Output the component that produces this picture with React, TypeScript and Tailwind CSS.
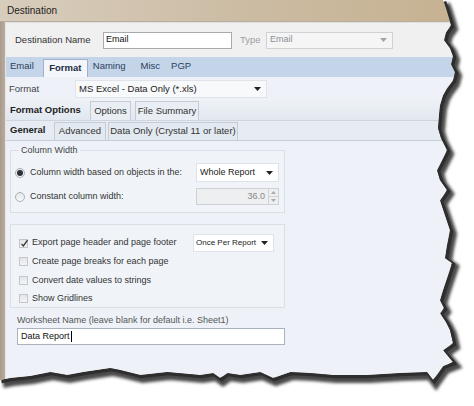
import React from "react";

const edge: [number, number][] = [
  [443, 0], [446, 8], [449, 18], [451, 25], [446, 32], [444, 40], [450, 48], [453, 56], [451, 64], [455, 72],
  [453, 80], [447, 88], [443, 95], [440, 105], [439, 115], [438, 128], [441, 138], [447, 150], [443, 158],
  [437, 170], [440, 180], [447, 190], [440, 200], [444, 212], [450, 230], [447, 245], [445, 258], [452, 263],
  [448, 275], [443, 290], [440, 300], [444, 308], [440, 313], [446, 322], [450, 330], [453, 343], [443, 350],
  [448, 356], [453, 362], [443, 366], [433, 380], [427, 372], [400, 373], [367, 375], [333, 375], [310, 373],
  [290, 372], [273, 378], [260, 372], [240, 375], [227, 373], [220, 378], [213, 373], [200, 375], [167, 372],
  [140, 375], [120, 370], [110, 368], [83, 372], [67, 375], [50, 372], [30, 376], [10, 378], [0, 380],
];

const edgeStr = edge.map((p) => p.join(",")).join(" ");
const outsideStr = edgeStr + " 0,406 474,406 474,0";

function Arrow({ color = "#222" }: { color?: string }) {
  return (
    <svg width="7" height="4" viewBox="0 0 7 4" className="shrink-0">
      <path d="M0 0 L7 0 L3.5 4 Z" fill={color} />
    </svg>
  );
}

function Radio({ on }: { on?: boolean }) {
  return (
    <span className="flex h-[10px] w-[10px] shrink-0 items-center justify-center rounded-full border border-[#a9b0b8] bg-gradient-to-b from-[#e4e6e9] to-[#f8f8f8]">
      {on && <span className="h-[6px] w-[6px] rounded-full bg-[#2d3036]" />}
    </span>
  );
}

function Check({ on }: { on?: boolean }) {
  return (
    <span className="relative flex h-[9px] w-[9px] shrink-0 items-center justify-center border border-[#c3c7cc] bg-gradient-to-b from-[#e3e5e8] to-[#f3f4f6]">
      {on && (
        <svg width="9" height="9" viewBox="0 0 9 9" className="absolute -top-[1px] left-0">
          <path d="M1.5 4.8 L3.4 7 L7.5 1.2" stroke="#333" strokeWidth="1.3" fill="none" />
        </svg>
      )}
    </span>
  );
}

export default function App() {
  return (
    <div
      className="relative h-[406px] w-[474px] overflow-hidden whitespace-nowrap bg-white text-[9px] text-[#333]"
      style={{ fontFamily: '"Liberation Sans", Arial, sans-serif' }}
    >
      <div className="flex h-full flex-col">
        {/* title bar */}
        <div className="flex h-[22px] items-center border-b border-[#b9ad9c] bg-gradient-to-r from-[#d8cdbd] via-[#ccbca4] to-[#c6b190] pl-[7px] text-[10px] text-[#222]">
          Destination
        </div>
        <div className="flex flex-1">
          {/* left frame */}
          <div className="w-[6px] border-r border-[#e7e3de] bg-gradient-to-r from-[#a89a8c] to-[#b9ad9f]" />
          <div className="flex flex-1 flex-col">
            {/* header */}
            <div className="flex h-[35px] items-center border-t border-[#e0e0e0] bg-[#f0f0f0]">
              <span className="ml-[9px] w-[88px] text-[9.5px] text-[#333]">Destination Name</span>
              <div className="flex h-[17px] w-[129px] items-center border border-[#a7abb0] bg-white pl-[2px] text-[9px] text-[#111]">
                Email
              </div>
              <span className="ml-[8px] w-[26px] text-[9.5px] text-[#9aa0a6]">Type</span>
              <div className="flex h-[17px] w-[127px] items-center justify-between border border-[#cfd2d6] bg-[#f5f5f5] pl-[3px] pr-[5px] text-[9px] text-[#8a8f95]">
                Email
                <Arrow color="#a0a4a8" />
              </div>
            </div>
            {/* tab bar */}
            <div className="flex h-[20px] items-end bg-[#c4d4e9] text-[9.5px] text-[#2b3f5c]">
              <span className="mb-[4px] ml-[4px]">Email</span>
              <span className="ml-[9px] flex h-[18px] w-[45px] items-center justify-center border border-b-0 border-[#9fb2c9] bg-[#f3f6fa] font-bold text-[#1c2b40]">
                Format
              </span>
              <span className="mb-[4px] ml-[5px]">Naming</span>
              <span className="mb-[4px] ml-[15px]">Misc</span>
              <span className="mb-[4px] ml-[11px]">PGP</span>
            </div>
            {/* body */}
            <div className="flex flex-1 flex-col bg-[#eef2f8]">
              <div className="mt-[3px] flex h-[18px] items-center">
                <span className="ml-[3px] w-[66px] text-[9.5px] text-[#444]">Format</span>
                <div className="flex h-[18px] w-[192px] items-center justify-between border border-[#dfe4ea] bg-[#f8f9fb] pl-[3px] pr-[5px] text-[9.5px] text-[#222]">
                  MS Excel - Data Only (*.xls)
                  <Arrow />
                </div>
              </div>
              {/* tab strip 2 */}
              <div className="mt-[3px] flex h-[20px] items-end border-b border-[#cdd5df] bg-gradient-to-b from-[#edf1f6] to-[#e2e8f0] text-[9.5px] text-[#333]">
                <span className="flex h-[19px] w-[81px] items-center pl-[4px] font-bold text-[#222]">Format Options</span>
                <span className="ml-[3px] flex h-[19px] w-[41px] items-center justify-center border border-b-0 border-[#c5ccd6] bg-[#e9eef4]">Options</span>
                <span className="ml-[4px] flex h-[19px] w-[64px] items-center justify-center border border-b-0 border-[#c5ccd6] bg-[#e9eef4]">File Summary</span>
              </div>
              {/* tab strip 3 */}
              <div className="flex h-[20px] items-end border-b border-[#c4ccd7] bg-[#e7ecf3] text-[9.5px] text-[#333]">
                <span className="flex h-[19px] w-[47px] items-center pl-[4px] font-bold text-[#222]">General</span>
                <span className="ml-[1px] flex h-[18px] w-[52px] items-center justify-center border border-b-0 border-[#c5ccd6] bg-[#e3e9f0]">Advanced</span>
                <span className="ml-[2px] flex h-[18px] w-[130px] items-center justify-center border border-b-0 border-[#c5ccd6] bg-[#e3e9f0]">Data Only (Crystal 11 or later)</span>
              </div>

              {/* group 1 */}
              <fieldset className="ml-[4px] mt-[4px] w-[275px] border border-[#d9dfe7] bg-[#f0f4f9] pb-[7px] pl-[4px]">
                <legend className="ml-[4px] px-[2px] text-[9px] leading-[10px] text-[#444]">Column Width</legend>
                <div className="mt-[8px] flex h-[19px] items-center">
                  <Radio on />
                  <span className="ml-[5px] w-[166px] text-[#333]">Column width based on objects in the:</span>
                  <div className="flex h-[19px] w-[83px] items-center justify-between border border-[#dde3ea] bg-white pl-[3px] pr-[5px] text-[#222]">
                    Whole Report
                    <Arrow />
                  </div>
                </div>
                <div className="mt-[6px] flex h-[17px] items-center">
                  <Radio />
                  <span className="ml-[5px] w-[166px] text-[#333]">Constant column width:</span>
                  <div className="flex h-[17px] w-[83px] items-center justify-end border border-[#cdd1d6] bg-[#eeeff1] text-[#888]">
                    <span className="mr-[3px]">36.0</span>
                    <div className="flex h-full w-[10px] flex-col border-l border-[#d0d4d9]">
                      <div className="flex flex-1 items-center justify-center border-b border-[#d0d4d9]">
                        <svg width="5" height="3" viewBox="0 0 5 3"><path d="M0 3 L5 3 L2.5 0 Z" fill="#aaa" /></svg>
                      </div>
                      <div className="flex flex-1 items-center justify-center">
                        <svg width="5" height="3" viewBox="0 0 5 3"><path d="M0 0 L5 0 L2.5 3 Z" fill="#aaa" /></svg>
                      </div>
                    </div>
                  </div>
                </div>
              </fieldset>

              {/* group 2 */}
              <div className="ml-[4px] mt-[11px] flex w-[275px] flex-col border border-[#d9dfe7] bg-[#f0f4f9] pl-[8px] pt-[9px]">
                <div className="flex h-[18px] items-center">
                  <Check on />
                  <span className="ml-[4px] w-[161px] text-[#333]">Export page header and page footer</span>
                  <div className="flex h-[18px] w-[81px] items-center justify-between border border-[#dde3ea] bg-white pl-[2px] pr-[5px] text-[8px] text-[#222]">
                    Once Per Report
                    <Arrow />
                  </div>
                </div>
                <div className="flex h-[19px] items-center">
                  <Check />
                  <span className="ml-[4px]">Create page breaks for each page</span>
                </div>
                <div className="flex h-[19px] items-center">
                  <Check />
                  <span className="ml-[4px]">Convert date values to strings</span>
                </div>
                <div className="flex h-[17px] items-center">
                  <Check />
                  <span className="ml-[4px]">Show Gridlines</span>
                </div>
              </div>

              <div className="ml-[11px] mt-[6px] h-[12px] leading-[12px] text-[#555]">
                Worksheet Name (leave blank for default i.e. Sheet1)
              </div>
              <div className="ml-[11px] mt-[2px] flex h-[17px] w-[268px] items-center border border-[#a9b2bd] bg-white pl-[3px] text-[#111]">
                Data Report
                <span className="ml-[1px] h-[11px] w-[1.5px] bg-black" />
              </div>
            </div>
          </div>
        </div>
      </div>

      {/* torn paper edge overlay */}
      <svg className="pointer-events-none absolute left-0 top-0" width="474" height="406" viewBox="0 0 474 406">
        <defs>
          <clipPath id="outside">
            <polygon points={outsideStr} />
          </clipPath>
          <filter id="blur" x="-10%" y="-10%" width="120%" height="120%">
            <feGaussianBlur stdDeviation="1.8" />
          </filter>
        </defs>
        <polygon points={outsideStr} fill="#ffffff" />
        <g clipPath="url(#outside)">
          <polyline points={edgeStr} transform="translate(3,4)" fill="none" stroke="#4a4a4a" strokeWidth="8" filter="url(#blur)" />
          <polyline points={edgeStr} transform="translate(1.5,1.5)" fill="none" stroke="#2e2e2e" strokeWidth="3.5" />
        </g>
      </svg>
    </div>
  );
}
